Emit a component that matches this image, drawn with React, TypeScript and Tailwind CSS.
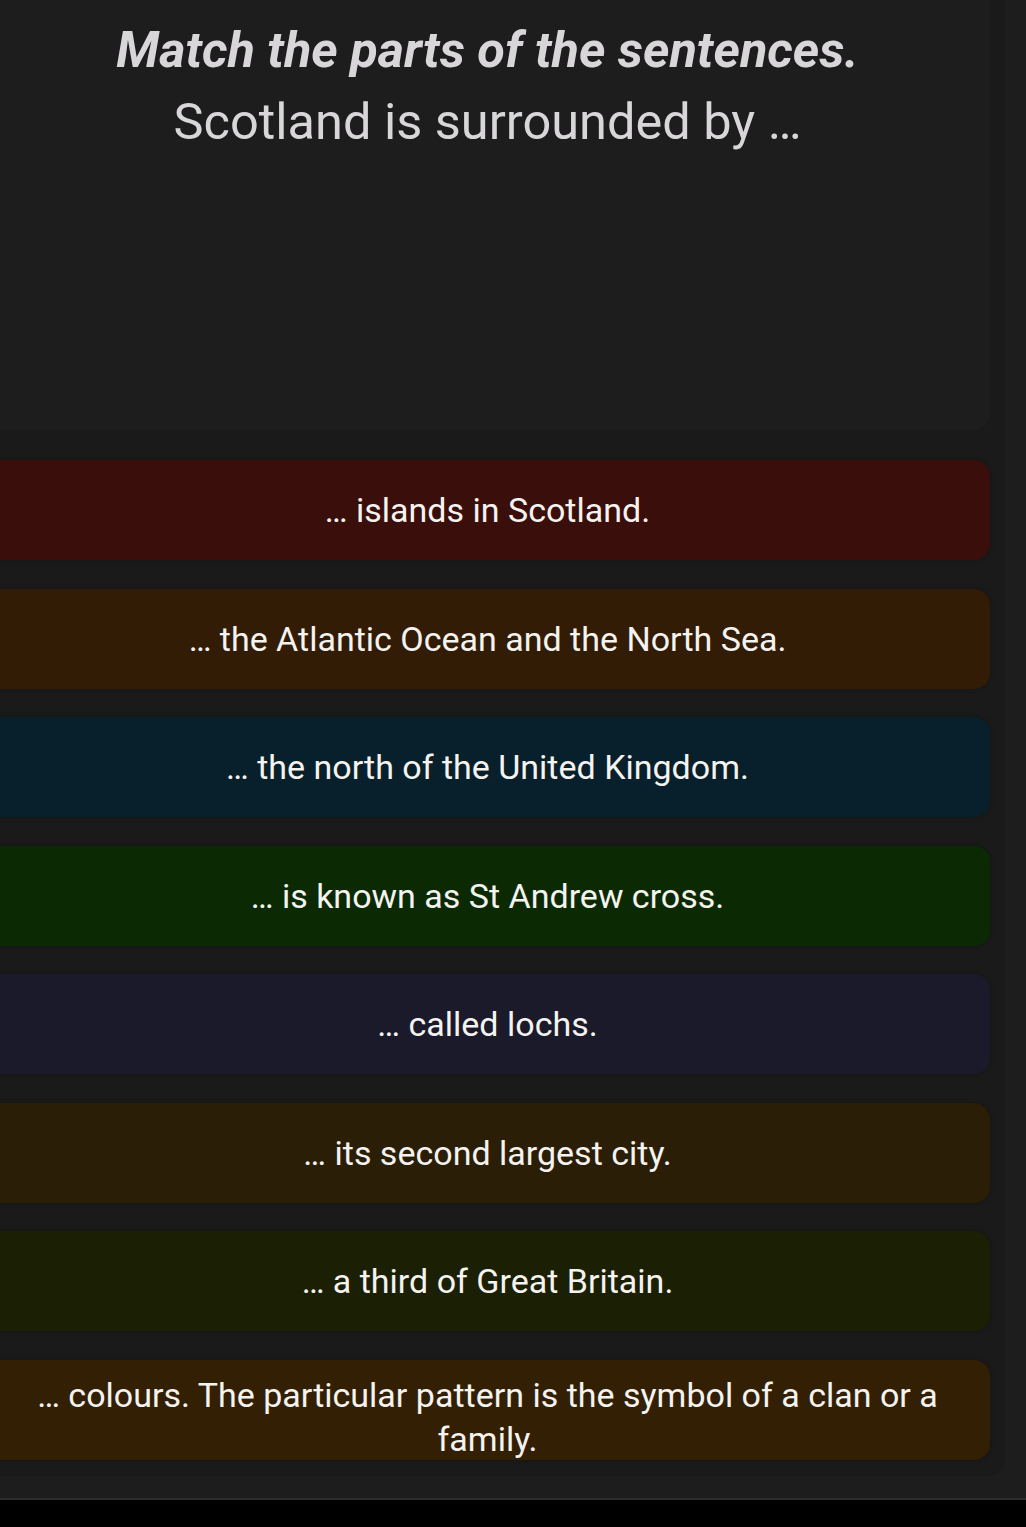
import React from "react";

const items: { text: string; bg: string; wrap?: boolean }[] = [
  { text: "… islands in Scotland.", bg: "bg-[#3a0e0a]" },
  { text: "… the Atlantic Ocean and the North Sea.", bg: "bg-[#321c05]" },
  { text: "… the north of the United Kingdom.", bg: "bg-[#08202b]" },
  { text: "… is known as St Andrew cross.", bg: "bg-[#0b2a04]" },
  { text: "… called lochs.", bg: "bg-[#1a1a2a]" },
  { text: "… its second largest city.", bg: "bg-[#2b1e07]" },
  { text: "… a third of Great Britain.", bg: "bg-[#1b1f04]" },
  {
    text: "… colours. The particular pattern is the symbol of a clan or a family.",
    bg: "bg-[#332004]",
    wrap: true,
  },
];

export default function App() {
  return (
    <div
      className="w-[1026px] h-[1527px] bg-black overflow-hidden"
      style={{ fontFamily: "Roboto, 'Noto Sans', sans-serif" }}
    >
      <div className="h-[1500px] bg-[#1c1d1c] border-b-2 border-[#2c2c2c]">
        <div className="ml-[-15px] w-[1020px] bg-[#1a1a1b] rounded-br-[16px] pb-[16px]">
          <div className="w-[1005px] h-[430px] bg-[#1c1d1c] rounded-br-[16px] pt-[20px] flex flex-col items-center">
            <div className="text-[50.5px] leading-[60px] font-bold italic text-[#d9d6da] whitespace-nowrap">
              Match the parts of the sentences.
            </div>
            <div className="text-[50.5px] leading-[64px] text-[#d9d6da] mt-[10px] whitespace-nowrap">
              Scotland is surrounded by …
            </div>
          </div>
          <div className="flex flex-col gap-[28.5px] pt-[30px]">
            {items.map((it, i) => (
              <div
                key={i}
                className={`w-[1005px] h-[100px] ${it.bg} ${it.wrap ? "pt-[14px]" : ""} rounded-r-[16px] flex items-center justify-center px-[40px] text-center text-[34px] leading-[44px] text-[#f5f3ef] shadow-[0_0_4px_rgba(0,0,0,0.25)]`}
              >
                {it.text}
              </div>
            ))}
          </div>
        </div>
      </div>
    </div>
  );
}
